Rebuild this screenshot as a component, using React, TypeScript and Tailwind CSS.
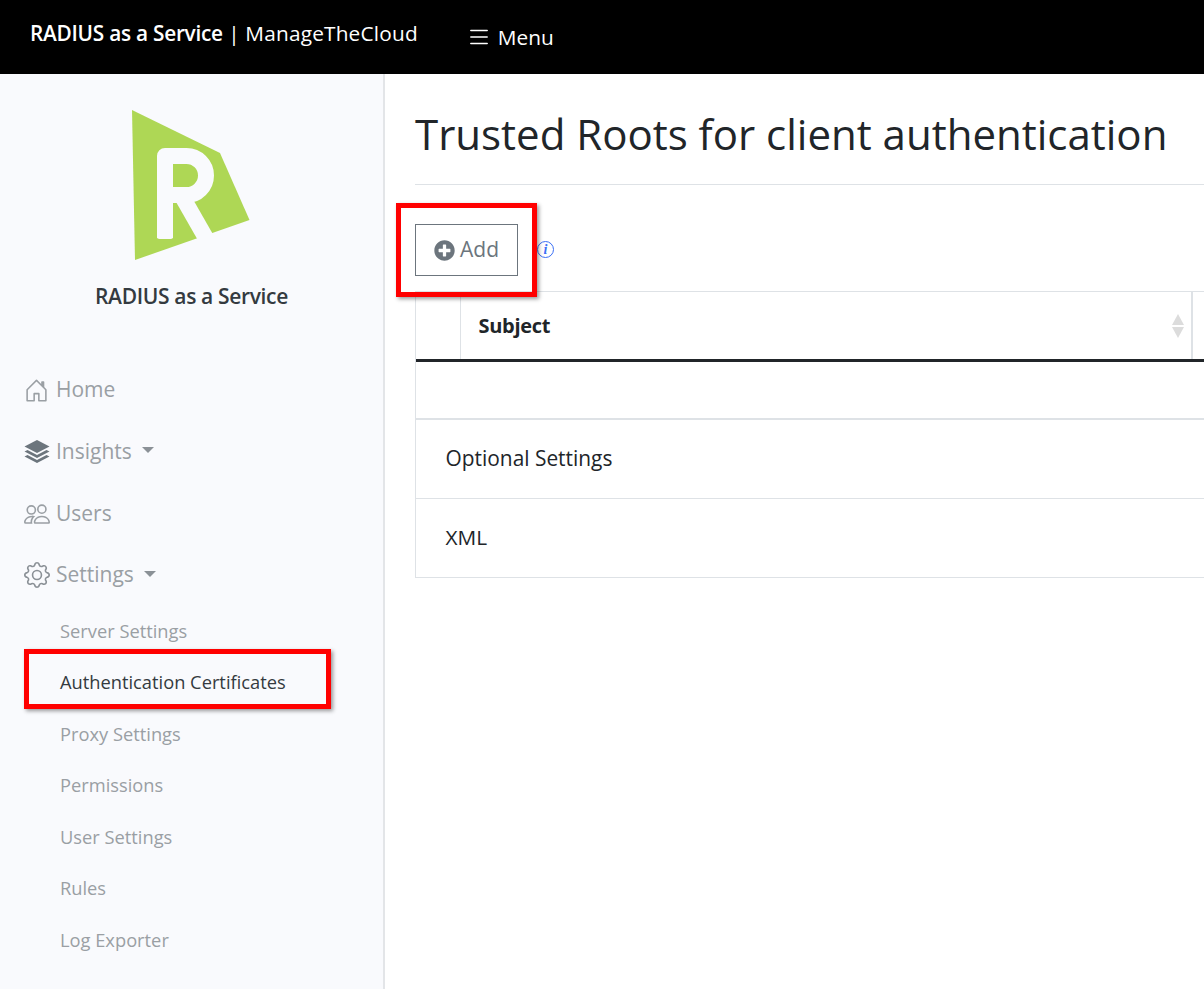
import { BsGear, BsHouseDoor, BsList, BsPeople } from "react-icons/bs";
import { FaPlusCircle } from "react-icons/fa";

const font = "font-['Open_Sans',sans-serif]";

const subItems = [
  { label: "Server Settings" },
  { label: "Authentication Certificates", active: true },
  { label: "Proxy Settings" },
  { label: "Permissions" },
  { label: "User Settings" },
  { label: "Rules" },
  { label: "Log Exporter" },
];

function Caret() {
  return <span className="ml-[10px] mt-[-3px] h-0 w-0 border-x-[6px] border-t-[6px] border-x-transparent border-t-[#8b9197]" />;
}

function Logo() {
  return (
    <svg width="120" height="152" viewBox="0 0 120 152" className="block">
      <polygon points="0,0 88,43 117.5,110 3,150" fill="#aed755" />
      <path d="M33 128 V46 H54.5 A19.5 19.5 0 0 1 54.5 85 H33" fill="none" stroke="#f9fafd" strokeWidth="16" strokeLinejoin="round" />
      <rect x="25" y="120" width="16" height="9" rx="2.5" fill="#f9fafd" />
      <path d="M51 88 L75 130" fill="none" stroke="#f9fafd" strokeWidth="16" />
    </svg>
  );
}

function Layers() {
  return (
    <svg width="26" height="26" viewBox="0 0 26 26" fill="#6c757d">
      <path d="M13 1 L25.5 7.5 L13 14 L0.5 7.5 Z" />
      <path d="M3.5 11 L13 16 L22.5 11 L25.5 12.5 L13 19 L0.5 12.5 Z" />
      <path d="M3.5 16 L13 21 L22.5 16 L25.5 17.5 L13 24 L0.5 17.5 Z" />
    </svg>
  );
}

function NavRow({ icon, label, caret }: { icon: React.ReactNode; label: string; caret?: boolean }) {
  return (
    <div className="flex h-[61.7px] items-center pl-6 text-[21px] text-[#9a9fa4]">
      <span className="flex w-[32px] items-center">{icon}</span>
      <span>{label}</span>
      {caret && <Caret />}
    </div>
  );
}

function Sidebar() {
  return (
    <aside className="w-[385px] shrink-0 border-r-2 border-[#e3e5e8] bg-[#f9fafd]">
      <div className="flex flex-col items-center pt-9">
        <Logo />
        <div className="mt-[19px] text-[21px] font-semibold tracking-[-0.35px] text-[#343a40]">RADIUS as a Service</div>
      </div>
      <nav className="mt-[46.8px]">
        <NavRow icon={<BsHouseDoor size={25} className="text-[#9a9fa4]" />} label="Home" />
        <NavRow icon={<Layers />} label="Insights" caret />
        <NavRow icon={<BsPeople size={26} className="text-[#9a9fa4]" />} label="Users" />
        <NavRow icon={<BsGear size={26} className="text-[#8b9197]" />} label="Settings" caret />
        <ul className="mt-[-1.5px]">
          {subItems.map((item) => (
            <li key={item.label} className={`relative flex h-[51.5px] items-center pl-[60px] text-[18.3px] ${item.active ? "text-[#343a40]" : "text-[#9a9fa4]"}`}>
              {item.label}
              {item.active && <span className="absolute left-6 top-[-7px] h-[60px] w-[307px] border-[5px] border-[#ff0000] shadow-[2px_2px_4px_rgba(0,0,0,0.4)]" />}
            </li>
          ))}
        </ul>
      </nav>
    </aside>
  );
}

function Content() {
  return (
    <main className="min-w-0 flex-1 overflow-hidden pl-[30px]">
      <h1 className="flex h-[111px] items-center whitespace-nowrap border-b border-[#dee2e6] pt-[10px] text-[42px] leading-none text-[#212529]">
        Trusted Roots for client authentication
      </h1>
      <div className="relative flex h-[106px] items-start pt-[39px]">
        <button className="flex h-[52px] w-[103px] items-center justify-center gap-[5px] border border-[#6c757d] text-[21px] text-[#6c757d]">
          <FaPlusCircle size={21} />
          Add
        </button>
        <span className="ml-[19px] mt-[17px] flex h-[17px] w-[17px] items-center justify-center rounded-full border border-[#3b6ff5] font-['Liberation_Serif',serif] text-[14px] font-bold italic text-[#3b6ff5]">i</span>
        <span className="absolute left-[-19px] top-[18px] h-[94px] w-[141px] border-[5px] border-[#ff0000] shadow-[2px_2px_4px_rgba(0,0,0,0.4)]" />
      </div>
      <div className="border-l border-[#dee2e6]">
        <div className="flex h-[71px] border-y border-t-[#dee2e6] border-b-[3px] border-b-[#212529]">
          <div className="w-[45px] border-r border-[#dee2e6]" />
          <div className="flex w-[732px] items-center justify-between border-r-2 border-[#dee2e6] pl-[17.5px] pr-[7.5px] text-[20px] font-bold tracking-[-0.3px] text-[#212529]">
            Subject
            <span className="flex flex-col gap-[2px]">
              <span className="h-0 w-0 border-x-[6.5px] border-b-[11px] border-x-transparent border-b-[#dcdcdc]" />
              <span className="h-0 w-0 border-x-[6.5px] border-t-[11px] border-x-transparent border-t-[#dcdcdc]" />
            </span>
          </div>
        </div>
        <div className="h-[58px] border-b-2 border-[#dee2e6]" />
        <div className="flex h-[79px] items-center border-b border-[#dee2e6] pl-[29.5px] text-[20.9px] text-[#212529]">Optional Settings</div>
        <div className="flex h-[79px] items-center border-b border-[#dee2e6] pl-[29.5px] text-[20.8px] text-[#212529]">XML</div>
      </div>
    </main>
  );
}

export default function App() {
  return (
    <div className={`flex h-[989px] flex-col overflow-hidden bg-white ${font}`}>
      <header className="flex h-[74px] shrink-0 items-center bg-black text-white">
        <div className="mb-[6px] ml-[30px] flex items-center text-[20.8px]">
          <span className="font-semibold tracking-[-0.25px]">RADIUS as a Service</span>
          <span className="mx-[5.5px]">|</span>
          <span className="tracking-[0.2px]">ManageTheCloud</span>
        </div>
        <div className="ml-[48px] flex items-center gap-[6px] text-[20.8px]">
          <BsList size={26} />
          <span className="mt-[2px]">Menu</span>
        </div>
      </header>
      <div className="flex flex-1">
        <Sidebar />
        <Content />
      </div>
    </div>
  );
}
